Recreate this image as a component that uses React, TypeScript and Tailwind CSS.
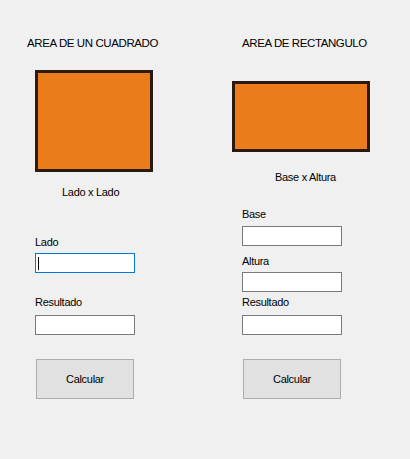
import React from "react";

const font = { fontFamily: '"Liberation Sans", Arial, sans-serif' };

function Input({ focused = false, className = "" }: { focused?: boolean; className?: string }) {
  return (
    <div
      className={`w-[100px] h-[20px] bg-white border ${focused ? "border-[#0078d7]" : "border-[#7a7a7a]"} flex items-center ${className}`}
    >
      {focused && <div className="ml-[2px] w-px h-[13px] bg-black" />}
    </div>
  );
}

function Button({ className = "" }: { className?: string }) {
  return (
    <div
      className={`w-[98px] h-[40px] bg-[#e1e1e1] border border-[#adadad] flex items-center justify-center text-[11px] tracking-[-0.3px] text-black ${className}`}
    >
      Calcular
    </div>
  );
}

export default function App() {
  return (
    <div
      className="w-[410px] h-[459px] bg-[#f0f0f0] flex text-[11px] leading-[13px] tracking-[-0.3px] text-black"
      style={font}
    >
      <div className="w-[205px] flex flex-col items-start">
        <div className="mt-[37px] ml-[27px] text-[11.5px] tracking-[-0.4px]">AREA DE UN CUADRADO</div>
        <div className="mt-[20px] ml-[35px] w-[118px] h-[102px] bg-[#ea7c19] border-[3px] border-[#2b1a0d]" />
        <div className="mt-[14px] ml-[62px]">Lado x Lado</div>
        <div className="mt-[37px] ml-[35px]">Lado</div>
        <Input focused className="mt-[4px] ml-[35px]" />
        <div className="mt-[23px] ml-[35px]">Resultado</div>
        <Input className="mt-[6px] ml-[35px]" />
        <Button className="mt-[24px] ml-[36px]" />
      </div>
      <div className="w-[205px] flex flex-col items-start">
        <div className="mt-[37px] ml-[37px] text-[11.5px] tracking-[-0.4px]">AREA DE RECTANGULO</div>
        <div className="mt-[31px] ml-[27px] w-[138px] h-[71px] bg-[#ea7c19] border-[3px] border-[#2b1a0d]" />
        <div className="mt-[19px] ml-[70px]">Base x Altura</div>
        <div className="mt-[24px] ml-[37px]">Base</div>
        <Input className="mt-[5px] ml-[37px]" />
        <div className="mt-[9px] ml-[37px]">Altura</div>
        <Input className="mt-[4px] ml-[37px]" />
        <div className="mt-[4px] ml-[37px]">Resultado</div>
        <Input className="mt-[6px] ml-[37px]" />
        <Button className="mt-[24px] ml-[38px]" />
      </div>
    </div>
  );
}
